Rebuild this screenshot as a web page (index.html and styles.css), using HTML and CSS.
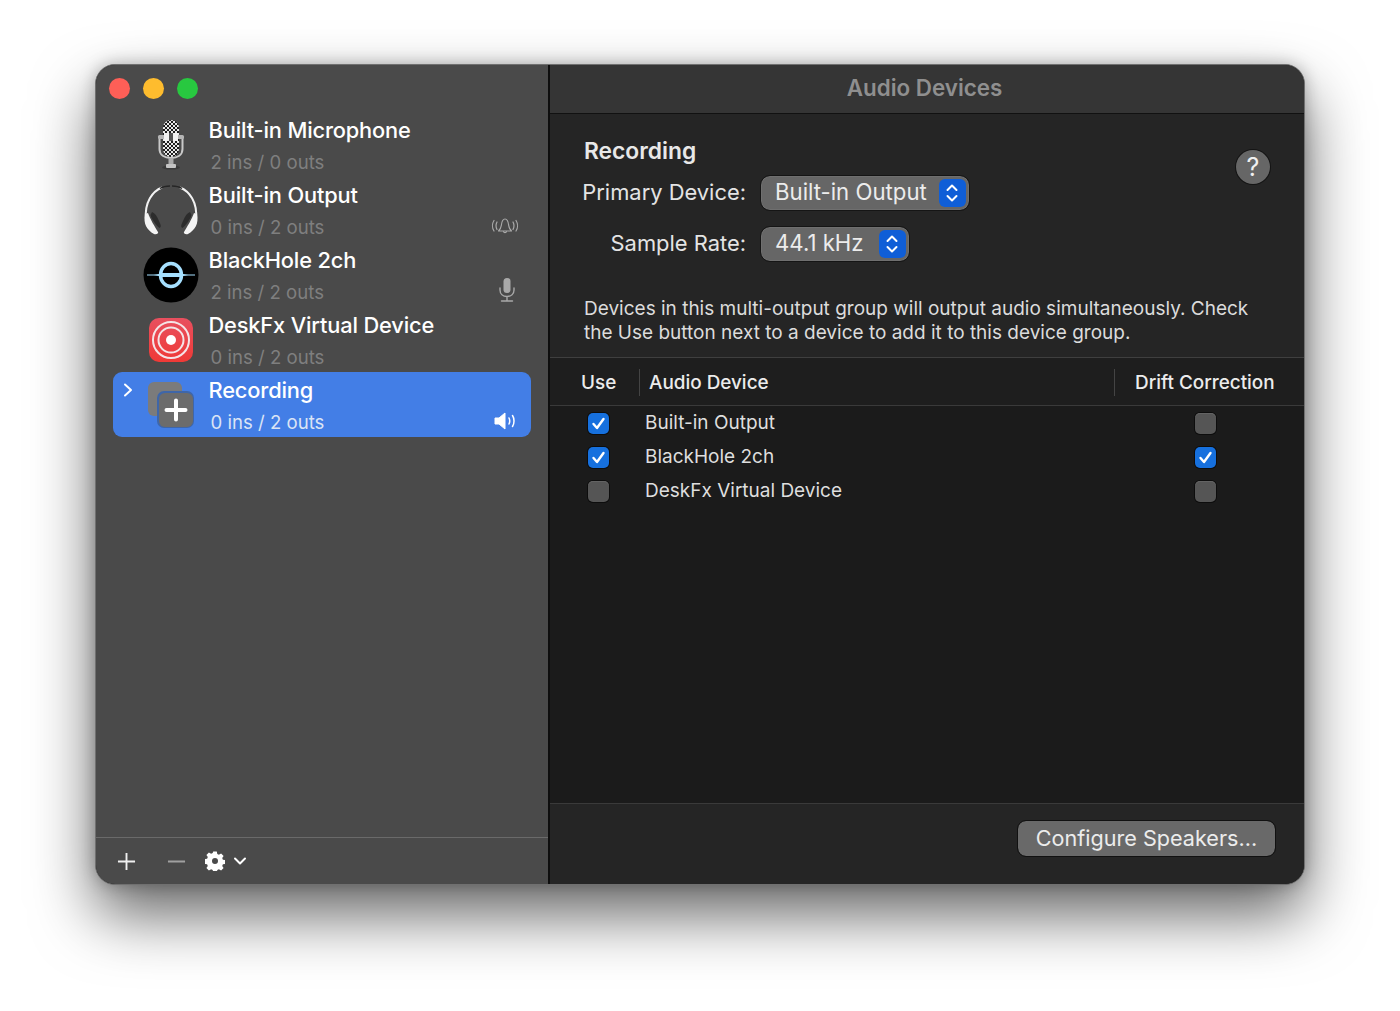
FILE: index.html
```html
<!DOCTYPE html>
<html lang="en">
<head>
<meta charset="utf-8">
<title>Audio Devices</title>
<link rel="stylesheet" href="styles.css">
</head>
<body>
<svg class="defs" width="0" height="0" aria-hidden="true">
  <defs>
    <pattern id="mesh" width="4" height="4" patternUnits="userSpaceOnUse">
      <rect width="4" height="4" fill="#e8e8e8"/>
      <rect width="2" height="2" fill="#1d1d1d"/>
      <rect x="2" y="2" width="2" height="2" fill="#1d1d1d"/>
    </pattern>
    <linearGradient id="red" x1="0" y1="0" x2="0" y2="1">
      <stop offset="0" stop-color="#e8505f"/>
      <stop offset="1" stop-color="#ef3a36"/>
    </linearGradient>
  </defs>
</svg>
<main class="window">
  <aside class="sidebar">
    <div class="lights">
      <span class="light light-red"></span>
      <span class="light light-yellow"></span>
      <span class="light light-green"></span>
    </div>
    <ul class="devices">
      <li class="device">
        <span class="disclosure"></span>
        <svg class="device-icon" viewBox="0 0 56 56">
          <ellipse cx="28" cy="50.5" rx="9" ry="2" fill="#3a3a3a"/>
          <rect x="20" y="3" width="16" height="37" rx="8" fill="url(#mesh)"/>
          <path d="M16.500 20v12c0 6 5 9 11.500 9s11.500-3 11.500-9V20" fill="none" stroke="#c9c9c9" stroke-width="2"/>
          <rect x="15" y="18" width="26" height="4" rx="1.500" fill="#b5b5b5"/>
          <rect x="21" y="16" width="14" height="8" fill="#f2f2f2"/>
          <rect x="26" y="16" width="4" height="8" fill="#555"/>
          <rect x="25.500" y="41" width="5" height="7" fill="#aaa"/>
          <rect x="23" y="47" width="10" height="4" rx="1" fill="#c4c4c4"/>
        </svg>
        <div class="device-text">
          <span class="device-name">Built-in Microphone</span>
          <span class="device-io">2 ins / 0 outs</span>
        </div>
      </li>
      <li class="device">
        <span class="disclosure"></span>
        <svg class="device-icon" viewBox="0 0 56 56">
          <path d="M3 38C1 20 10 9 19 5.500" fill="none" stroke="#f2f2f2" stroke-width="2"/>
          <path d="M53 38C55 20 46 9 37 5.500" fill="none" stroke="#f2f2f2" stroke-width="2"/>
          <path d="M17 6.500C20 4.500 23 4 27 4M39 6.500C36 4.500 33 4 29 4" fill="none" stroke="#262626" stroke-width="1.500"/>
          <path d="M2 32c-2 10 2 16 9 20 2 1 5-.500 4-2-3-5-8-13-10-19z" fill="#f4f4f4"/>
          <path d="M54 32c2 10-2 16-9 20-2 1-5-.500-4-2 3-5 8-13 10-19z" fill="#f4f4f4"/>
          <path d="M9 30c3 1 5 4 7 9 2 4 2.500 6 .500 7-3-2-8-9-9-13z" fill="#2c2c2c"/>
          <path d="M47 30c-3 1-5 4-7 9-2 4-2.500 6-.500 7 3-2 8-9 9-13z" fill="#2c2c2c"/>
        </svg>
        <div class="device-text">
          <span class="device-name">Built-in Output</span>
          <span class="device-io">0 ins / 2 outs</span>
        </div>
        <svg class="status-icon status-bell" viewBox="0 0 28 18">
          <g fill="none" stroke="#a9a9a9" stroke-width="1.200" stroke-linecap="round" stroke-linejoin="round">
            <path d="M7.500 14h13c-1.500-1.500-2.500-3-2.800-5.500C17.300 5 16.500 2 14 2s-3.300 3-3.700 6.500C10 11 9 12.500 7.500 14z"/>
            <path d="M12.500 14.500c.3 1.500 2.700 1.500 3 0"/>
            <path d="M6 5c-1.300 2.500-1.300 5 0 7.500M3 3.500C1 6.500 1 11 3 14M22 5c1.300 2.500 1.300 5 0 7.500M25 3.500c2 3 2 7.500 0 10.500"/>
          </g>
        </svg>
      </li>
      <li class="device">
        <span class="disclosure"></span>
        <svg class="device-icon" viewBox="0 0 56 56">
          <circle cx="28" cy="28" r="27.500" fill="#000"/>
          <path d="M4 28h48" stroke="#a6e0ff" stroke-width="1.200"/>
          <path d="M9 28c5-.300 7-.800 9-2h20c2 1.200 4 1.700 9 2-5 .300-7 .800-9 2H18c-2-1.200-4-1.700-9-2z" fill="#a6e0ff"/>
          <ellipse cx="28" cy="28" rx="10.500" ry="11.500" fill="none" stroke="#a6e0ff" stroke-width="3.500"/>
        </svg>
        <div class="device-text">
          <span class="device-name">BlackHole 2ch</span>
          <span class="device-io">2 ins / 2 outs</span>
        </div>
        <svg class="status-icon status-mic" viewBox="0 0 18 26">
          <rect x="5.500" y="1" width="7" height="15" rx="3.500" fill="#a9a9a9"/>
          <path d="M2 11v2c0 4 3 6.500 7 6.500s7-2.500 7-6.500v-2M9 19.500v4M3.500 24h11" fill="none" stroke="#a9a9a9" stroke-width="1.400" stroke-linecap="round"/>
        </svg>
      </li>
      <li class="device">
        <span class="disclosure"></span>
        <svg class="device-icon" viewBox="0 0 56 56">
          <rect x="6" y="6" width="44" height="44" rx="10" fill="url(#red)"/>
          <circle cx="28" cy="28" r="18" fill="none" stroke="#f4e4e6" stroke-width="2"/>
          <circle cx="28" cy="28" r="12.500" fill="none" stroke="#f4e4e6" stroke-width="2"/>
          <circle cx="28" cy="28" r="5" fill="#fff"/>
        </svg>
        <div class="device-text">
          <span class="device-name">DeskFx Virtual Device</span>
          <span class="device-io">0 ins / 2 outs</span>
        </div>
      </li>
      <li class="device device-selected">
        <span class="disclosure">
          <svg class="chevron-right" viewBox="0 0 10 14"><path d="M2 1.500 8 7l-6 5.500" fill="none" stroke="#fff" stroke-width="2" stroke-linecap="round" stroke-linejoin="round"/></svg>
        </span>
        <svg class="device-icon" viewBox="0 0 56 56">
          <rect x="5" y="5" width="34" height="34" rx="6" fill="#7b7b7b"/>
          <rect x="14" y="14" width="37" height="37" rx="7" fill="#3f66a8"/>
          <rect x="16" y="16" width="34" height="34" rx="6" fill="#6c6c6c"/>
          <path d="M33 23.500v19M23.500 33h19" stroke="#fff" stroke-width="4" stroke-linecap="round"/>
        </svg>
        <div class="device-text">
          <span class="device-name">Recording</span>
          <span class="device-io">0 ins / 2 outs</span>
        </div>
        <svg class="status-icon status-speaker" viewBox="0 0 24 18">
          <path d="M1 6h4l6-5v16l-6-5H1z" fill="#fff" stroke="#fff" stroke-width="1" stroke-linejoin="round"/>
          <path d="M15 6c1 2 1 4 0 6M18.500 3.500c2 3 2 8 0 11" fill="none" stroke="#fff" stroke-width="1.500" stroke-linecap="round"/>
        </svg>
      </li>
    </ul>
    <div class="sidebar-tools">
      <svg class="tool tool-plus" viewBox="0 0 20 20"><path d="M10 1v18M1 10h18" stroke="#f0f0f0" stroke-width="2"/></svg>
      <svg class="tool tool-minus" viewBox="0 0 20 20"><path d="M1 10h18" stroke="#a0a0a0" stroke-width="2"/></svg>
      <svg class="tool tool-gear" viewBox="0 0 20 20">
        <path fill="#fff" fill-rule="evenodd" d="M8.200 .6h3.600l.5 2.500 1.600.7 2.200-1.400 2.500 2.500-1.400 2.200.7 1.600 2.500.5v3.600l-2.500.5-.7 1.600 1.400 2.200-2.500 2.500-2.200-1.400-1.600.7-.5 2.500H8.200l-.5-2.500-1.600-.7-2.200 1.400-2.500-2.500 1.400-2.200-.7-1.600-2.500-.5V8.200l2.500-.5.7-1.600-1.400-2.200 2.500-2.500 2.200 1.400 1.600-.7zM10 7a3 3 0 1 0 0 6 3 3 0 0 0 0-6z"/>
      </svg>
      <svg class="tool tool-caret" viewBox="0 0 14 10"><path d="M2 2.500 7 7.500l5-5" fill="none" stroke="#fff" stroke-width="2" stroke-linecap="round" stroke-linejoin="round"/></svg>
    </div>
  </aside>
  <section class="content">
    <header class="titlebar">Audio Devices</header>
    <div class="settings">
      <div class="settings-top">
        <div class="settings-form">
          <h2 class="settings-heading">Recording</h2>
          <div class="form-grid">
            <span class="form-label">Primary Device:</span>
            <div class="select">
              <span class="select-value">Built-in Output</span>
              <span class="stepper"><svg viewBox="0 0 14 22"><path d="M2.500 8 7 3.500 11.500 8M2.500 14 7 18.500 11.500 14" fill="none" stroke="#fff" stroke-width="2" stroke-linecap="round" stroke-linejoin="round"/></svg></span>
            </div>
            <span class="form-label">Sample Rate:</span>
            <div class="select select-short">
              <span class="select-value">44.1 kHz</span>
              <span class="stepper"><svg viewBox="0 0 14 22"><path d="M2.500 8 7 3.500 11.500 8M2.500 14 7 18.500 11.500 14" fill="none" stroke="#fff" stroke-width="2" stroke-linecap="round" stroke-linejoin="round"/></svg></span>
            </div>
          </div>
        </div>
        <button class="help">?</button>
      </div>
      <p class="settings-note">Devices in this multi-output group will output audio simultaneously. Check<br>the Use button next to a device to add it to this device group.</p>
    </div>
    <div class="table">
      <div class="table-head">
        <span class="col-use">Use</span>
        <span class="col-name">Audio Device</span>
        <span class="col-drift">Drift Correction</span>
      </div>
      <div class="table-row">
        <span class="cell-use"><span class="check is-on"><svg viewBox="0 0 21 21"><path d="M5.500 11 9 15l6.500-9" fill="none" stroke="#fff" stroke-width="2.400" stroke-linecap="round" stroke-linejoin="round"/></svg></span></span>
        <span class="cell-name">Built-in Output</span>
        <span class="cell-drift"><span class="check"></span></span>
      </div>
      <div class="table-row">
        <span class="cell-use"><span class="check is-on"><svg viewBox="0 0 21 21"><path d="M5.500 11 9 15l6.500-9" fill="none" stroke="#fff" stroke-width="2.400" stroke-linecap="round" stroke-linejoin="round"/></svg></span></span>
        <span class="cell-name">BlackHole 2ch</span>
        <span class="cell-drift"><span class="check is-on"><svg viewBox="0 0 21 21"><path d="M5.500 11 9 15l6.500-9" fill="none" stroke="#fff" stroke-width="2.400" stroke-linecap="round" stroke-linejoin="round"/></svg></span></span>
      </div>
      <div class="table-row">
        <span class="cell-use"><span class="check"></span></span>
        <span class="cell-name">DeskFx Virtual Device</span>
        <span class="cell-drift"><span class="check"></span></span>
      </div>
    </div>
    <footer class="content-footer">
      <button class="push-button">Configure Speakers...</button>
    </footer>
  </section>
</main>
</body>
</html>
```
FILE: styles.css
```css
* { box-sizing: border-box; }
html, body { margin: 0; height: 100%; }
body {
  background: #fff;
  font-family: Inter, "Liberation Sans", sans-serif;
  overflow: hidden;
  padding: 64px 95px 0;
}
.defs { position: absolute; }
.window {
  width: 1210px;
  height: 821px;
  display: flex;
  border-radius: 20px;
  overflow: hidden;
  border: 1px solid #707070;
  box-shadow: 0 30px 62px rgba(0, 0, 0, .6), 0 0 16px rgba(0, 0, 0, .25);
  background: #252525;
}
.sidebar {
  width: 454px;
  flex: none;
  display: flex;
  flex-direction: column;
  background: #4a4a4a;
  border-right: 2px solid #0e0e0e;
}
.lights {
  height: 47px;
  display: flex;
  gap: 13px;
  padding: 13px 0 0 13px;
}
.light { width: 21px; height: 21px; border-radius: 50%; }
.light-red { background: #fe5f57; }
.light-yellow { background: #febc2e; }
.light-green { background: #28c840; }
.devices {
  list-style: none;
  margin: 0;
  padding: 0 17px;
  flex: 1;
}
.device {
  height: 65px;
  display: flex;
  align-items: center;
  border-radius: 9px;
  position: relative;
}
.device-selected { background: #437ee6; }
.disclosure {
  width: 30px;
  flex: none;
  display: flex;
  padding: 0 0 29px 10px;
}
.chevron-right { width: 10px; height: 14px; }
.device-icon { width: 56px; height: 56px; flex: none; margin-top: 1px; }
.device-text {
  display: flex;
  flex-direction: column;
  margin-left: 9.500px;
  flex: 1;
}
.device-name {
  font-size: 21.800px;
  font-weight: 500;
  line-height: 28px;
  color: #fff;
  letter-spacing: -.15px;
}
.device-io {
  font-size: 18.600px;
  line-height: 22px;
  margin: 7px 0 0 2px;
  color: #7f7f7f;
}
.device-selected .device-io { color: #dbe4f5; }
.status-icon { flex: none; position: absolute; }
.status-bell { width: 28px; height: 18px; right: 12px; top: 40px; }
.status-mic { width: 18px; height: 26px; right: 15px; top: 35px; }
.status-speaker { width: 24px; height: 18px; right: 13px; top: 40px; }
.sidebar-tools {
  height: 47px;
  border-top: 1px solid #6a6a6a;
  display: flex;
  align-items: center;
  padding: 0 0 0 20.500px;
}
.tool { flex: none; }
.tool-plus { width: 19px; height: 19px; }
.tool-minus { width: 19px; height: 19px; margin-left: 31px; }
.tool-gear { width: 20px; height: 20px; margin-left: 19px; }
.tool-caret { width: 14px; height: 10px; margin-left: 8px; }
.content {
  flex: 1;
  display: flex;
  flex-direction: column;
  min-width: 0;
}
.titlebar {
  height: 49px;
  flex: none;
  display: flex;
  align-items: center;
  justify-content: center;
  background: #353535;
  border-bottom: 1px solid #111;
  color: #8f8f8f;
  font-size: 22.400px;
  font-weight: 600;
  padding: 0 5px 3px 0;
}
.settings {
  height: 244px;
  flex: none;
  padding: 22px 34px 0;
  border-bottom: 1px solid #3f3f3f;
}
.settings-top {
  display: flex;
  justify-content: space-between;
  align-items: flex-start;
}
.settings-heading {
  margin: 0 0 10px;
  font-size: 22.800px;
  font-weight: 600;
  line-height: 30px;
  color: #e8e8e8;
}
.form-grid {
  display: grid;
  grid-template-columns: 162px auto;
  column-gap: 15px;
  row-gap: 17px;
  justify-content: start;
  justify-items: start;
  align-items: center;
}
.form-label {
  justify-self: end;
  font-size: 21.900px;
  color: #e4e4e4;
  white-space: nowrap;
  padding-bottom: 3px;
}
.select {
  height: 34px;
  display: flex;
  align-items: center;
  border-radius: 9px;
  background: #666;
  box-shadow: inset 0 0 0 1px #6f6f6f;
  padding: 0 3px 0 14px;
  outline: 1px solid #151515;
}
.select-value {
  font-size: 22.200px;
  color: #ececec;
  margin-right: 12px;
  white-space: nowrap;
  padding-bottom: 3px;
}
.select-short .select-value { margin-right: 15px; }
.stepper {
  width: 27px;
  height: 28px;
  border-radius: 6px;
  background: #0f5ed7;
  display: flex;
  align-items: center;
  justify-content: center;
}
.stepper svg { width: 14px; height: 22px; }
.help {
  width: 34px;
  height: 34px;
  margin: 14px 0 0;
  padding: 0;
  border: 0;
  border-radius: 50%;
  background: #666;
  color: #f0f0f0;
  font: 400 25px Inter, "Liberation Sans", sans-serif;
  box-shadow: 0 0 0 1px #141414;
}
.settings-note {
  margin: 36px 0 0;
  font-size: 19px;
  line-height: 24px;
  color: #dcdcdc;
  white-space: nowrap;
}
.table {
  flex: 1;
  background: #1b1b1b;
  border-bottom: 1px solid #3a3a3a;
}
.table-head {
  height: 48px;
  display: flex;
  align-items: center;
  padding-top: 2px;
  border-bottom: 1px solid #3a3a3a;
  font-size: 18.900px;
  font-weight: 500;
  color: #ececec;
  background: #1e1e1e;
}
.col-use {
  width: 89px;
  flex: none;
  padding-left: 31px;
}
.col-name {
  flex: 1;
  padding-left: 9px;
  border-left: 1px solid #444;
  line-height: 27px;
}
.col-drift {
  width: 190px;
  flex: none;
  padding-left: 20px;
  border-left: 1px solid #444;
  line-height: 27px;
  white-space: nowrap;
}
.table-row {
  height: 34px;
  display: flex;
  align-items: center;
  font-size: 19px;
  color: #dedede;
}
.cell-use { width: 95px; flex: none; padding-left: 38px; display: flex; }
.cell-name { flex: 1; position: relative; top: -1px; }
.cell-drift { width: 130px; flex: none; padding-left: 21px; display: flex; }
.check {
  width: 21px;
  height: 21px;
  border-radius: 5px;
  background: #555;
  box-shadow: 0 0 0 1px #0d0d0d, inset 0 1px 0 #636363;
  display: block;
}
.check.is-on { background: #1670de; box-shadow: 0 0 0 1px #0d0d0d; }
.check svg { width: 21px; height: 21px; display: block; }
.content-footer {
  height: 80px;
  flex: none;
  background: #252525;
  display: flex;
  justify-content: flex-end;
  padding: 17px 29px 0 0;
}
.push-button {
  width: 257px;
  height: 35px;
  padding: 0 0 2px;
  border: 0;
  border-radius: 8px;
  background: #696969;
  color: #ececec;
  font: 400 21.600px Inter, "Liberation Sans", sans-serif;
  outline: 1px solid #111;
}
```
